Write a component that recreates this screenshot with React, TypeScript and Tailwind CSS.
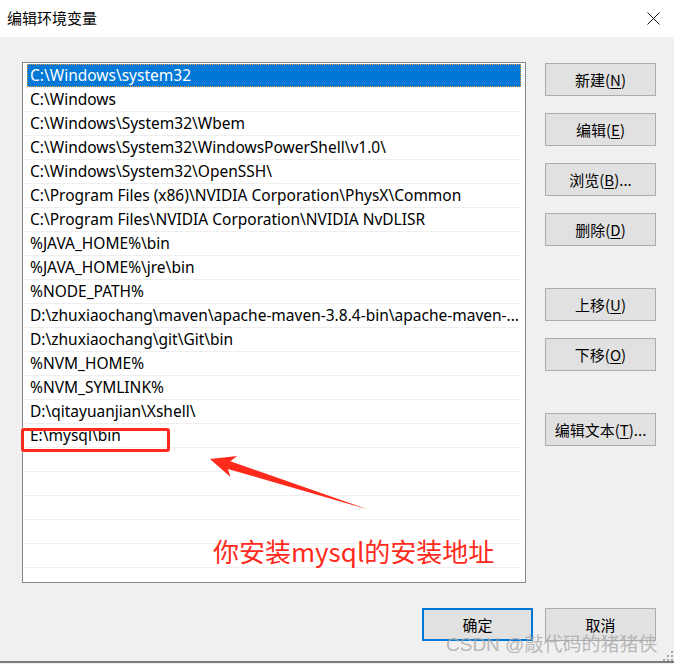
import React from "react";

const paths = [
  "C:\\Windows\\system32",
  "C:\\Windows",
  "C:\\Windows\\System32\\Wbem",
  "C:\\Windows\\System32\\WindowsPowerShell\\v1.0\\",
  "C:\\Windows\\System32\\OpenSSH\\",
  "C:\\Program Files (x86)\\NVIDIA Corporation\\PhysX\\Common",
  "C:\\Program Files\\NVIDIA Corporation\\NVIDIA NvDLISR",
  "%JAVA_HOME%\\bin",
  "%JAVA_HOME%\\jre\\bin",
  "%NODE_PATH%",
  "D:\\zhuxiaochang\\maven\\apache-maven-3.8.4-bin\\apache-maven-...",
  "D:\\zhuxiaochang\\git\\Git\\bin",
  "%NVM_HOME%",
  "%NVM_SYMLINK%",
  "D:\\qitayuanjian\\Xshell\\",
  "E:\\mysql\\bin",
];

const rows = [...paths, ...Array(7).fill("")];

const cjk = { fontFamily: '"Noto Sans CJK SC", "Noto Sans", sans-serif' };
const latin = { fontFamily: '"Noto Sans", "Noto Sans CJK SC", sans-serif' };

function Btn({
  label,
  mn,
  tail = "",
  primary = false,
}: {
  label: string;
  mn?: string;
  tail?: string;
  primary?: boolean;
}) {
  return (
    <div
      className={
        "h-[33px] w-[111px] flex items-center justify-center bg-[#e1e1e1] text-[15px] text-black leading-none " +
        (primary ? "border-2 border-[#0078d7]" : "border border-[#adadad]")
      }
      style={cjk}
    >
      <span>
        {label}
        {mn ? (
          <>
            (<span className="underline underline-offset-2">{mn}</span>)
          </>
        ) : null}
        {tail}
      </span>
    </div>
  );
}

export default function App() {
  return (
    <div className="relative w-[674px] h-[664px] bg-[#f0f0f0] flex flex-col overflow-hidden">
      {/* title bar */}
      <div className="h-[37px] bg-white flex items-center justify-between pl-[7px] pr-[14px] shrink-0">
        <span className="text-[15px] text-black" style={cjk}>
          编辑环境变量
        </span>
        <svg width="13" height="13" viewBox="0 0 13 13">
          <path d="M0.5 0.5 L12.5 12.5 M12.5 0.5 L0.5 12.5" stroke="#111" strokeWidth="1" />
        </svg>
      </div>

      {/* body */}
      <div className="flex pt-[25px] pl-[22px]">
        <div className="w-[504px] h-[521px] border border-[#828790] bg-white pt-[1px] pl-[1px] pr-[4px] overflow-hidden">
          {rows.map((r, i) => (
            <div
              key={i}
              className="h-[24px] border-b border-[#efefef] flex items-stretch text-[15.5px] whitespace-nowrap"
              style={latin}
            >
              {i === 0 ? (
                <div className="ml-[3px] flex-1 bg-[#0078d7] text-white flex items-center pl-[3px] pt-[1px] outline-1 outline-dotted outline-[#e9a04a] -outline-offset-1">
                  {r}
                </div>
              ) : (
                <div className="flex-1 flex items-center pl-[6px] pt-[1px] text-black">{r}</div>
              )}
            </div>
          ))}
        </div>

        <div className="ml-[19px] pt-[1px] flex flex-col">
          <div className="flex flex-col gap-[17px]">
            <Btn label="新建" mn="N" />
            <Btn label="编辑" mn="E" />
            <Btn label="浏览" mn="B" tail="..." />
            <Btn label="删除" mn="D" />
          </div>
          <div className="mt-[42px] flex flex-col gap-[17px]">
            <Btn label="上移" mn="U" />
            <Btn label="下移" mn="O" />
          </div>
          <div className="mt-[42px]">
            <Btn label="编辑文本" mn="T" tail="..." />
          </div>
        </div>
      </div>

      {/* bottom buttons */}
      <div className="mt-[25px] flex justify-end gap-[12px] pr-[18px]">
        <Btn label="确定" primary />
        <Btn label="取消" />
      </div>

      <div className="mt-auto mb-[1px] h-[2px] bg-[#7a7a7a]" />

      {/* annotations */}
      <div className="absolute left-[21px] top-[428px] w-[149px] h-[24px] border-[3px] border-[#ff2a1c] rounded-[3px]" />
      <svg className="absolute left-0 top-0" width="674" height="664" viewBox="0 0 674 664">
        <g transform="translate(210 459) rotate(17.7)">
          <polygon points="0,0 25,-11 20,-4 166,0 20,4 25,11" fill="#ff2a1c" />
        </g>
      </svg>
      <div
        className="absolute left-[213px] top-[538px] text-[26px] leading-none text-[#ff2a1c] whitespace-nowrap"
        style={cjk}
      >
        你安装mysql的安装地址
      </div>

      {/* watermark */}
      <div
        className="absolute left-[446px] top-[635px] text-[19px] leading-none text-[#a8a8a8]/80 whitespace-nowrap"
        style={{ fontFamily: '"Liberation Sans", "Noto Sans CJK SC", sans-serif' }}
      >
        CSDN @敲代码的猪猪侠
      </div>

      {/* resize grip */}
      <svg className="absolute right-[1px] bottom-[3px]" width="10" height="10" viewBox="0 0 10 10">
        <rect x="8" y="0" width="2" height="2" fill="#a8a8a8" />
        <rect x="4" y="4" width="2" height="2" fill="#a8a8a8" />
        <rect x="8" y="4" width="2" height="2" fill="#a8a8a8" />
        <rect x="0" y="8" width="2" height="2" fill="#a8a8a8" />
        <rect x="4" y="8" width="2" height="2" fill="#a8a8a8" />
        <rect x="8" y="8" width="2" height="2" fill="#a8a8a8" />
      </svg>
    </div>
  );
}
